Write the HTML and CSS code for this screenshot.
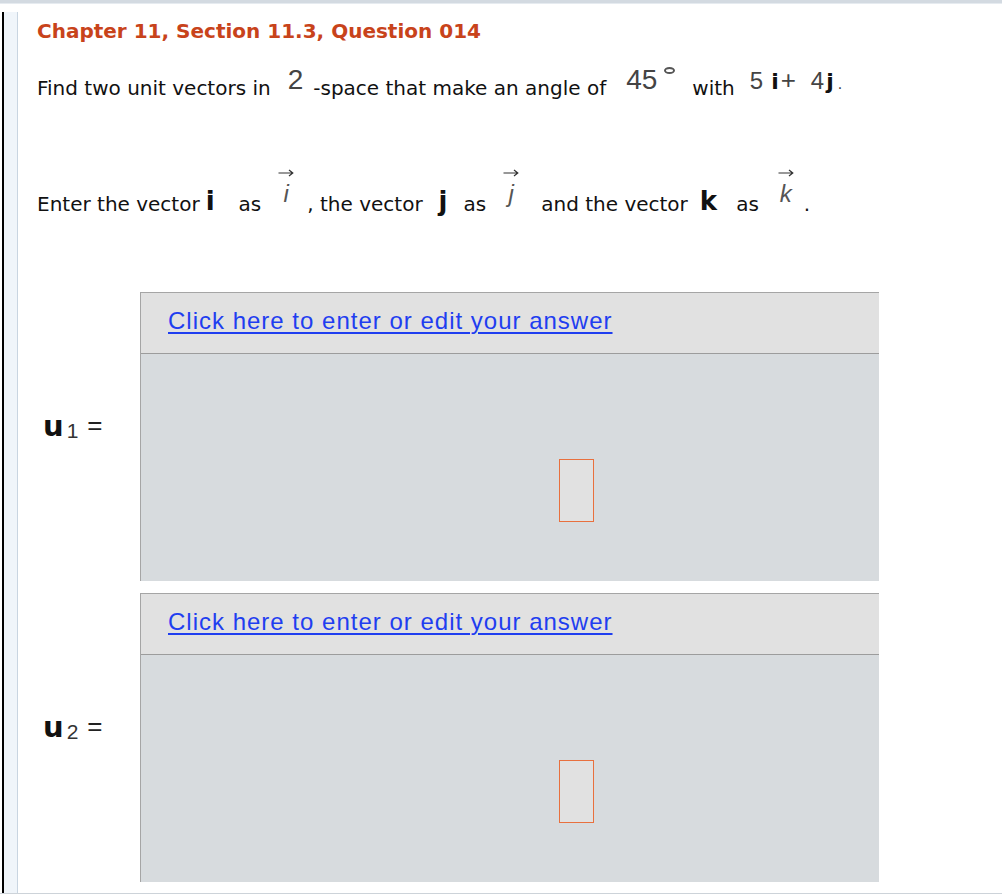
FILE: index.html
```html
<!DOCTYPE html>
<html>
<head>
<meta charset="utf-8">
<title>Chapter 11, Section 11.3, Question 014</title>
<link rel="stylesheet" href="styles.css">
</head>
<body>
<div class="topbar"></div>
<div class="frame">
  <div class="rail"></div>
  <div class="strip"></div>
  <main class="content">
    <h1 class="title">Chapter 11, Section 11.3, Question 014</h1>
    <p class="q1">Find two unit vectors in<span class="mnum two">2</span>-space that make an angle of<span class="mnum deg">45<span class="degree"></span></span>with<span class="expr"><span class="d5">5</span><b class="bi">i</b><span class="plus">+</span><span class="d4">4</span><b class="bj">j</b><span class="dot">.</span></span></p>
    <p class="q2">Enter the vector<b class="bl bl-i">i</b>as<span class="vec vec-i"><svg class="arr" width="16" height="8" viewBox="0 0 16 8"><path d="M0.5 4H14.5M11 1L14.8 4L11 7" fill="none" stroke="#333" stroke-width="1.2"/></svg><i class="vl">i</i></span>, the vector<b class="bl bl-j">j</b>as<span class="vec vec-j"><svg class="arr" width="16" height="8" viewBox="0 0 16 8"><path d="M0.5 4H14.5M11 1L14.8 4L11 7" fill="none" stroke="#333" stroke-width="1.2"/></svg><i class="vl">j</i></span>and the vector<b class="bl bl-k">k</b>as<span class="vec vec-k"><svg class="arr" width="16" height="8" viewBox="0 0 16 8"><path d="M0.5 4H14.5M11 1L14.8 4L11 7" fill="none" stroke="#333" stroke-width="1.2"/></svg><i class="vl">k</i></span><span class="end">.</span></p>

    <div class="answers">
      <div class="ans">
        <div class="label"><b class="u">u</b><span class="sub">1</span><span class="eq">=</span></div>
        <div class="box">
          <div class="box-head"><a class="edit" href="#">Click here to enter or edit your answer</a></div>
          <div class="box-body"><div class="slot"></div></div>
        </div>
      </div>
      <div class="ans">
        <div class="label"><b class="u">u</b><span class="sub">2</span><span class="eq">=</span></div>
        <div class="box">
          <div class="box-head"><a class="edit" href="#">Click here to enter or edit your answer</a></div>
          <div class="box-body"><div class="slot"></div></div>
        </div>
      </div>
    </div>
  </main>
</div>
</body>
</html>
```

FILE: styles.css
```css
html, body {
  margin: 0;
  padding: 0;
  background: #ffffff;
}

body {
  font-family: "DejaVu Sans", Verdana, sans-serif;
  color: #111111;
  overflow: hidden;
}

.topbar {
  height: 3px;
  background: #d3dae1;
  border-bottom: 1px solid #e6ebf0;
  margin-bottom: 8px;
}

.frame {
  display: flex;
  height: 881px;
  padding-left: 2px;
  border-bottom: 1px solid #cdd3d9;
}

.rail {
  width: 2px;
  background: #000000;
}

.strip {
  width: 13px;
  background: #f0f5fa;
  border-right: 1px solid #c9d5e1;
}

.content {
  flex: 1;
  padding-top: 7px;
}

.title {
  margin: 0;
  padding-left: 19px;
  font-size: 20px;
  line-height: 24px;
  font-weight: bold;
  color: #c8431b;
}

.q1 {
  margin: 24px 0 0;
  padding-left: 19px;
  font-size: 20px;
  line-height: 24px;
  white-space: nowrap;
}

.mnum {
  font-family: "Liberation Sans", Arial, sans-serif;
  font-size: 28px;
  line-height: 0;
  color: #444444;
  vertical-align: 6px;
}

.two {
  margin: 0 10px 0 17px;
}

.deg {
  margin: 0 17px 0 20px;
}

.degree {
  display: inline-block;
  width: 7px;
  height: 3px;
  border: 2px solid #555555;
  border-radius: 50%;
  margin-left: 7px;
  vertical-align: 15px;
}

.expr {
  margin-left: 15px;
  line-height: 0;
  vertical-align: 6px;
  color: #444444;
  font-family: "Liberation Sans", Arial, sans-serif;
  font-size: 24px;
}

.bi, .bj {
  font-family: "DejaVu Sans", Verdana, sans-serif;
  font-weight: bold;
  color: #111111;
  font-size: 22px;
}

.bi {
  margin-left: 8px;
}

.plus {
  margin: 0 15px 0 2px;
  font-size: 26px;
}

.bj {
  margin-left: 2px;
}

.dot {
  margin-left: 4px;
  font-size: 16px;
}

.q2 {
  margin: 69px 0 0;
  padding-left: 19px;
  font-size: 20px;
  line-height: 24px;
  white-space: nowrap;
}

.bl {
  font-size: 26px;
  line-height: 0;
  vertical-align: 1px;
}

.bl-i {
  margin: 0 24px 0 6px;
}

.bl-j {
  margin: 0 16px 0 16px;
}

.bl-k {
  margin: 0 19px 0 12px;
}

.vec {
  display: inline-block;
  vertical-align: 9px;
  line-height: 18px;
  text-align: center;
  width: 16px;
}

.vec-i {
  margin: 0 13px 0 17px;
}

.vec-j {
  margin: 0 22px 0 17px;
}

.vec-k {
  margin: 0 0 0 19px;
}

.arr {
  display: block;
  margin-bottom: 8px;
}

.vl {
  font-family: "Liberation Sans", Arial, sans-serif;
  font-size: 24px;
  font-weight: normal;
  color: #555555;
}

.end {
  margin-left: 10px;
}

.answers {
  margin-top: 76px;
  display: flex;
  flex-direction: column;
  gap: 12px;
}

.ans {
  display: grid;
  grid-template-columns: 122px 739px;
}

.label {
  display: flex;
  align-items: center;
  padding: 0 0 22px 25px;
  white-space: nowrap;
}

.u {
  font-family: "DejaVu Sans", Verdana, sans-serif;
  font-size: 29px;
  font-weight: bold;
}

.sub {
  font-family: "Liberation Sans", Arial, sans-serif;
  font-size: 21px;
  color: #333333;
  margin-left: 3px;
  position: relative;
  top: 5px;
}

.eq {
  font-family: "Liberation Sans", Arial, sans-serif;
  font-size: 26px;
  color: #222222;
  margin-left: 9px;
}

.box {
  border-top: 1px solid #a5a5a5;
  border-left: 1px solid #a5a5a5;
  display: flex;
  flex-direction: column;
  height: 288px;
}

.box-head {
  height: 56px;
  padding: 0 0 4px 27px;
  background: #e1e1e1;
  border-bottom: 1px solid #9c9c9c;
  line-height: 56px;
}

.edit {
  font-family: "Liberation Sans", Arial, sans-serif;
  font-size: 24px;
  letter-spacing: 1px;
  color: #1f3ef0;
  text-decoration: underline;
  text-decoration-thickness: 1.5px;
  text-underline-offset: 3px;
}

.box-body {
  flex: 1;
  background: #d7dbde;
  padding: 105px 0 0 418px;
}

.slot {
  width: 33px;
  height: 61px;
  border: 1px solid #e8703e;
  background: #e1e1e1;
}
```
